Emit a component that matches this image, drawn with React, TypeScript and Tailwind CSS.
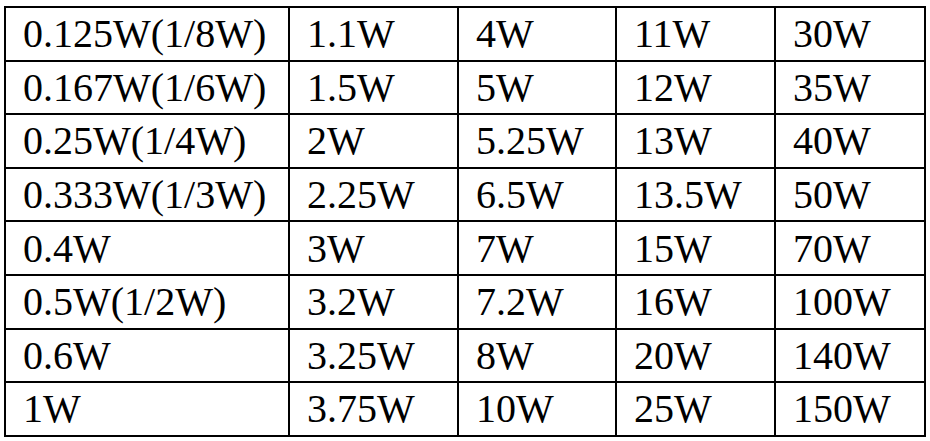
import React from 'react'

const rows: string[][] = [
  ['0.125W(1/8W)', '1.1W', '4W', '11W', '30W'],
  ['0.167W(1/6W)', '1.5W', '5W', '12W', '35W'],
  ['0.25W(1/4W)', '2W', '5.25W', '13W', '40W'],
  ['0.333W(1/3W)', '2.25W', '6.5W', '13.5W', '50W'],
  ['0.4W', '3W', '7W', '15W', '70W'],
  ['0.5W(1/2W)', '3.2W', '7.2W', '16W', '100W'],
  ['0.6W', '3.25W', '8W', '20W', '140W'],
  ['1W', '3.75W', '10W', '25W', '150W'],
]

export default function App() {
  return (
    <div className="w-[930px] h-[441px] bg-white pt-[6px] pl-[4px]">
      <table
        className="table-fixed border-collapse text-black text-[40px] leading-none"
        style={{ fontFamily: '"Liberation Serif", "Times New Roman", serif' }}
      >
        <colgroup>
          <col className="w-[284px]" />
          <col className="w-[169px]" />
          <col className="w-[158px]" />
          <col className="w-[159px]" />
          <col className="w-[150px]" />
        </colgroup>
        <tbody>
          {rows.map((row, i) => (
            <tr key={i} className="h-[53.6px]">
              {row.map((cell, j) => (
                <td
                  key={j}
                  className="border-2 border-black p-0 pl-[17px] pt-[1px] align-middle whitespace-nowrap"
                >
                  {cell}
                </td>
              ))}
            </tr>
          ))}
        </tbody>
      </table>
    </div>
  )
}
